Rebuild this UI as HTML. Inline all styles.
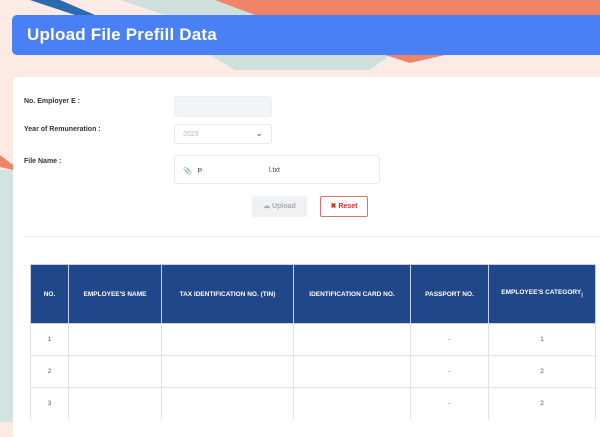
<!DOCTYPE html>
<html><head><style>
*{margin:0;padding:0;box-sizing:border-box}
body{width:600px;height:422px;overflow:hidden;background:#fcebe5;font-family:"Liberation Sans",sans-serif;position:relative}
.bg{position:absolute;left:0;top:0}
.hdr{position:absolute;left:12px;top:15px;width:600px;height:40px;background:#4a80f5;border-radius:5px;color:#fff;font-weight:bold;font-size:17px;padding:10px 0 0 15px;letter-spacing:0.2px}
.card{position:absolute;left:13px;top:77px;width:600px;height:360px;background:#fff;border-radius:4px}
.lbl{position:absolute;left:24px;font-size:7px;font-weight:bold;color:#333}
.box{position:absolute;border:1px solid #e8e8ea;border-radius:3px;background:#fff}
.btn{position:absolute;font-size:7px;font-weight:bold;border-radius:2px;text-align:center;line-height:21px}
table{position:absolute;left:30px;top:264px;border-collapse:collapse;font-size:6.5px}
th{background:#1f4789;color:#fff;height:59px;border:1px solid #c8d2e4;font-weight:bold}
td{height:32px;border-left:1px solid #e2e2e2;border-right:1px solid #e2e2e2;text-align:center;color:#555}
tr.r td{border-bottom:1px solid #e2e2e2}
.sep{position:absolute;left:24px;top:236px;width:576px;height:1px;background:#eee}
</style></head><body>
<svg class="bg" width="600" height="422">
<polygon points="210,0 600,0 600,15 250,15" fill="#f08468"/>
<polygon points="120,0 215,0 255,15 165,15" fill="#cfe0dc"/>
<polygon points="30,0 60,0 95,15 75,15" fill="#2a6bb0"/>
<polygon points="210,55 390,55 370,70 235,70" fill="#cfe0dc"/>
<polygon points="385,55 445,55 410,63" fill="#f08468"/>
<polygon points="0,155 13,165 13,170 0,167" fill="#f08468"/>
<rect x="0" y="170" width="13" height="252" fill="#d2e4df"/>
</svg>
<div class="hdr">Upload File Prefill Data</div>
<div class="card"></div>
<div class="lbl" style="top:98px">No. Employer E :</div>
<div class="lbl" style="top:126px">Year of Remuneration :</div>
<div class="lbl" style="top:158px">File Name :</div>
<div class="box" style="left:174px;top:96px;width:98px;height:21px;background:#f2f3f5;border-color:#eceef0"></div>
<div class="box" style="left:174px;top:124px;width:98px;height:20px;font-size:7px;color:#bbb;padding:6px 0 0 8px">2023<span style="position:absolute;right:8px;top:3px;color:#555;font-size:9px">&#8964;</span></div>
<div class="box" style="left:174px;top:155px;width:206px;height:29px;font-size:7px;color:#444;padding:11px 0 0 8px"><span style="color:#ccc">&#128206;</span>&nbsp;&nbsp;&nbsp;P<span style="position:absolute;left:94px">l.txt</span></div>
<div class="btn" style="left:252px;top:196px;width:55px;height:21px;background:#f0f1f3;color:#aaa">&#9729; Upload</div>
<div class="btn" style="left:320px;top:196px;width:48px;height:21px;border:1px solid #e07070;color:#d03030;line-height:19px">&#10006; Reset</div>
<div class="sep"></div>
<table>
<tr><th style="width:38px">NO.</th><th style="width:93px">EMPLOYEE'S NAME</th><th style="width:132px">TAX IDENTIFICATION NO. (TIN)</th><th style="width:117px">IDENTIFICATION CARD NO.</th><th style="width:78px">PASSPORT NO.</th><th style="width:107px">EMPLOYEE'S CATEGORY<sub>|</sub></th></tr>
<tr class="r"><td>1</td><td></td><td></td><td></td><td>-</td><td>1</td></tr>
<tr class="r"><td>2</td><td></td><td></td><td></td><td>-</td><td>2</td></tr>
<tr><td>3</td><td></td><td></td><td></td><td>-</td><td>2</td></tr>
</table>
</body></html>
